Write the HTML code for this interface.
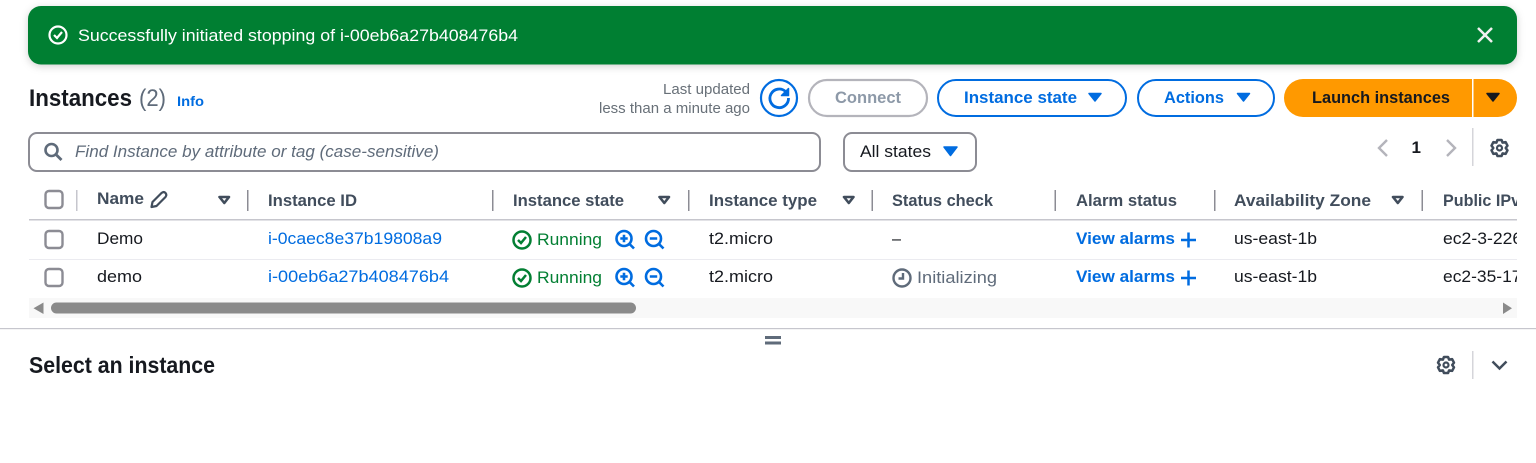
<!DOCTYPE html>
<html><head><meta charset="utf-8"><style>
html,body{margin:0;padding:0;background:#fff;width:1536px;height:463px;overflow:hidden}
svg{display:block;filter:blur(.3px)}
text{font-family:"Liberation Sans",sans-serif;white-space:pre}
.b{font-weight:700}
.h{font-weight:700;font-size:17px;fill:#414d5c}
.c{font-size:17px;fill:#16191f}
.l{font-size:17px;fill:#006ce0}
.lb{font-size:17px;font-weight:700;fill:#006ce0}
.cb{fill:#fff;stroke:#8c8c94;stroke-width:2.400}
.ft{fill:none;stroke:#414d5c;stroke-width:2.600;stroke-linejoin:round}
</style></head><body>
<svg width="1536" height="463" viewBox="0 0 1536 463" xmlns="http://www.w3.org/2000/svg">
<defs>
<filter id="s" x="-5%" y="-50%" width="110%" height="200%"><feDropShadow dx="0" dy="2" stdDeviation="4" flood-color="#000" flood-opacity=".18"/></filter>
<path id="gear" d="M-2.06-8L2.06-8L3.1-5.37L6.11-5.9L8-2.34L6.2 0L8 2.34L6.11 5.9L3.1 5.37L2.06 8L-2.06 8L-3.1 5.37L-6.11 5.9L-8 2.34L-6.2 0L-8-2.34L-6.11-5.9L-3.1-5.37Z" fill="none" stroke="#414d5c" stroke-width="2.500" stroke-linejoin="round"/>
<clipPath id="tc"><rect x="29" y="180" width="1488" height="118"/></clipPath>
</defs>
<rect x="28" y="6" width="1489" height="58.500" rx="13" fill="#037f33" filter="url(#s)"/>
<circle cx="58" cy="35" r="8.500" fill="none" stroke="#fff" stroke-width="2.200"/>
<path d="M54 35l3 3 5-6" fill="none" stroke="#fff" stroke-width="2.200"/>
<text x="78" y="41" font-size="17" fill="#fff" textLength="440" lengthAdjust="spacingAndGlyphs">Successfully initiated stopping of i-00eb6a27b408476b4</text>
<path d="M1478 28l14 14M1492 28l-14 14" stroke="#f0f0f0" stroke-width="2.500" fill="none"/>

<text x="29" y="106" font-size="24" class="b" fill="#16191f" textLength="103" lengthAdjust="spacingAndGlyphs">Instances</text>
<text x="139" y="106" font-size="24" fill="#5f6b7a" textLength="27" lengthAdjust="spacingAndGlyphs">(2)</text>
<text x="177" y="106" font-size="14" class="b" fill="#006ce0" textLength="27" lengthAdjust="spacingAndGlyphs">Info</text>

<text x="663" y="94" font-size="15" fill="#687078" textLength="87" lengthAdjust="spacingAndGlyphs">Last updated</text>
<text x="599" y="113" font-size="15" fill="#687078" textLength="151" lengthAdjust="spacingAndGlyphs">less than a minute ago</text>

<circle cx="779" cy="98" r="18" fill="#fff" stroke="#006ce0" stroke-width="2.200"/>
<path d="M785.500 91.500A9.300 9.300 0 1 0 788.500 98" fill="none" stroke="#006ce0" stroke-width="2.800"/>
<path d="M788.500 88.500v7h-7z" fill="#006ce0" stroke="#006ce0" stroke-width="1.500" stroke-linejoin="round"/>

<rect x="809" y="80" width="118" height="36" rx="18" fill="#fff" stroke="#b4b4bb" stroke-width="2.200"/>
<text x="835" y="103" font-size="17" class="b" fill="#8d99a8" textLength="66" lengthAdjust="spacingAndGlyphs">Connect</text>

<rect x="938" y="80" width="188" height="36" rx="18" fill="#fff" stroke="#006ce0" stroke-width="2"/>
<text x="964" y="103" font-size="17" class="b" fill="#006ce0" textLength="113" lengthAdjust="spacingAndGlyphs">Instance state</text>
<path d="M1089 93.500h12l-6 7.500z" fill="#006ce0" stroke="#006ce0" stroke-width="1.500" stroke-linejoin="round"/>

<rect x="1138" y="80" width="136" height="36" rx="18" fill="#fff" stroke="#006ce0" stroke-width="2"/>
<text x="1164" y="103" font-size="17" class="b" fill="#006ce0" textLength="60" lengthAdjust="spacingAndGlyphs">Actions</text>
<path d="M1237.500 93.500h12l-6 7.500z" fill="#006ce0" stroke="#006ce0" stroke-width="1.500" stroke-linejoin="round"/>

<path d="M1303 79h169v38h-169a19 19 0 0 1 0-38z" fill="#ff9900"/>
<path d="M1473.500 79h24.500a19 19 0 0 1 0 38h-24.500z" fill="#ff9900"/>
<text x="1312" y="103" font-size="17" class="b" fill="#16191f" textLength="138" lengthAdjust="spacingAndGlyphs">Launch instances</text>
<path d="M1487 93.500h12l-6 7.500z" fill="#16191f" stroke="#16191f" stroke-width="1.500" stroke-linejoin="round"/>

<rect x="29" y="133" width="791" height="38" rx="8" fill="#fff" stroke="#8c8c94" stroke-width="2"/>
<circle cx="51.500" cy="150" r="6" fill="none" stroke="#5f6b7a" stroke-width="2.600"/>
<path d="M56 154.500l5.500 5.500" stroke="#5f6b7a" stroke-width="2.800"/>
<text x="75" y="157" font-size="17" font-style="italic" fill="#5f6b7a" textLength="364" lengthAdjust="spacingAndGlyphs">Find Instance by attribute or tag (case-sensitive)</text>

<rect x="844" y="133" width="132" height="38" rx="8" fill="#fff" stroke="#8c8c94" stroke-width="2"/>
<text x="860" y="157" font-size="17" fill="#16191f" textLength="71" lengthAdjust="spacingAndGlyphs">All states</text>
<path d="M944 147h13l-6.500 8.500z" fill="#006ce0" stroke="#006ce0" stroke-width="1.500" stroke-linejoin="round"/>

<path d="M1387 140l-8 8 8 8" fill="none" stroke="#b4b4bb" stroke-width="2.400"/>
<text x="1411.500" y="153" font-size="17" class="b" fill="#16191f">1</text>
<path d="M1447 140l8 8-8 8" fill="none" stroke="#b4b4bb" stroke-width="2.400"/>
<rect x="1472" y="128" width="1.500" height="38" fill="#d5d5da"/>
<use href="#gear" x="1499.500" y="148"/><circle cx="1499.500" cy="148" r="2.500" fill="none" stroke="#414d5c" stroke-width="2.200"/>

<rect x="29" y="298" width="1488" height="20" fill="#f8f8f8"/>
<g clip-path="url(#tc)">
<rect x="45.500" y="191" width="17" height="17" rx="3.500" class="cb"/>
<rect x="76" y="190" width="1.500" height="21" fill="#c6c6cd"/>
<text x="97" y="204" class="h" textLength="47" lengthAdjust="spacingAndGlyphs">Name</text>
<path d="M151.500 207l1-5 9-9c1.500-1.200 3-1.200 4 0s1 2.700 0 4l-9 9z" fill="none" stroke="#414d5c" stroke-width="2.200" stroke-linejoin="round"/>
<path d="M219.500 197h9.500l-4.700 6z" class="ft"/>
<rect x="247" y="190" width="1.500" height="21" fill="#8c8c94"/>
<text x="268" y="206" class="h" textLength="89" lengthAdjust="spacingAndGlyphs">Instance ID</text>
<rect x="492" y="190" width="1.500" height="21" fill="#8c8c94"/>
<text x="513" y="206" class="h" textLength="111" lengthAdjust="spacingAndGlyphs">Instance state</text>
<path d="M659.500 197h9.500l-4.700 6z" class="ft"/>
<rect x="688" y="190" width="1.500" height="21" fill="#8c8c94"/>
<text x="709" y="206" class="h" textLength="108" lengthAdjust="spacingAndGlyphs">Instance type</text>
<path d="M844 197h9.500l-4.700 6z" class="ft"/>
<rect x="871.500" y="190" width="1.500" height="21" fill="#8c8c94"/>
<text x="892" y="206" class="h" textLength="101" lengthAdjust="spacingAndGlyphs">Status check</text>
<rect x="1054.500" y="190" width="1.500" height="21" fill="#8c8c94"/>
<text x="1076" y="206" class="h" textLength="101" lengthAdjust="spacingAndGlyphs">Alarm status</text>
<rect x="1214" y="190" width="1.500" height="21" fill="#8c8c94"/>
<text x="1234" y="206" class="h" textLength="137" lengthAdjust="spacingAndGlyphs">Availability Zone</text>
<path d="M1393 197h9.500l-4.700 6z" class="ft"/>
<rect x="1421.500" y="190" width="1.500" height="21" fill="#8c8c94"/>
<text x="1443" y="206" class="h" textLength="86" lengthAdjust="spacingAndGlyphs">Public IPv4</text>

<rect x="29" y="219" width="1488" height="1.500" fill="#c6c6cd"/>
<rect x="29" y="259" width="1488" height="1" fill="#ebebf0"/>

<rect x="45.500" y="231" width="17" height="17" rx="3.500" class="cb"/>
<text x="97" y="244" class="c" textLength="46" lengthAdjust="spacingAndGlyphs">Demo</text>
<text x="268" y="244" class="l" textLength="174" lengthAdjust="spacingAndGlyphs">i-0caec8e37b19808a9</text>
<circle cx="522" cy="240" r="8.500" fill="none" stroke="#037f33" stroke-width="2.500"/>
<path d="M518 240l3 3 5-6" fill="none" stroke="#037f33" stroke-width="2.500"/>
<text x="537" y="245" font-size="17" fill="#037f33" textLength="65" lengthAdjust="spacingAndGlyphs">Running</text>
<circle cx="624" cy="238.500" r="7.500" fill="none" stroke="#006ce0" stroke-width="2.600"/><path d="M629.500 244l4.500 4.500M620.300 238.500h7.400M624 234.800v7.400" fill="none" stroke="#006ce0" stroke-width="2.600"/>
<circle cx="653.500" cy="238.500" r="7.500" fill="none" stroke="#006ce0" stroke-width="2.600"/><path d="M659 244l4.500 4.500M649.800 238.500h7.400" fill="none" stroke="#006ce0" stroke-width="2.600"/>
<text x="709" y="244" class="c" textLength="64" lengthAdjust="spacingAndGlyphs">t2.micro</text>
<text x="892" y="244" class="c" textLength="9" lengthAdjust="spacingAndGlyphs">–</text>
<text x="1076" y="244" class="lb" textLength="99" lengthAdjust="spacingAndGlyphs">View alarms</text>
<path d="M1181 240h15M1188.500 232.500v15" stroke="#006ce0" stroke-width="2.500" fill="none"/>
<text x="1234" y="244" class="c" textLength="83" lengthAdjust="spacingAndGlyphs">us-east-1b</text>
<text x="1443" y="244" class="c" textLength="85" lengthAdjust="spacingAndGlyphs">ec2-3-226-</text>

<rect x="45.500" y="269" width="17" height="17" rx="3.500" class="cb"/>
<text x="97" y="282" class="c" textLength="45" lengthAdjust="spacingAndGlyphs">demo</text>
<text x="268" y="282" class="l" textLength="181" lengthAdjust="spacingAndGlyphs">i-00eb6a27b408476b4</text>
<circle cx="522" cy="278" r="8.500" fill="none" stroke="#037f33" stroke-width="2.500"/>
<path d="M518 278l3 3 5-6" fill="none" stroke="#037f33" stroke-width="2.500"/>
<text x="537" y="283" font-size="17" fill="#037f33" textLength="65" lengthAdjust="spacingAndGlyphs">Running</text>
<circle cx="624" cy="276.500" r="7.500" fill="none" stroke="#006ce0" stroke-width="2.600"/><path d="M629.500 282l4.500 4.500M620.300 276.500h7.400M624 272.800v7.400" fill="none" stroke="#006ce0" stroke-width="2.600"/>
<circle cx="653.500" cy="276.500" r="7.500" fill="none" stroke="#006ce0" stroke-width="2.600"/><path d="M659 282l4.500 4.500M649.800 276.500h7.400" fill="none" stroke="#006ce0" stroke-width="2.600"/>
<text x="709" y="282" class="c" textLength="64" lengthAdjust="spacingAndGlyphs">t2.micro</text>
<circle cx="902" cy="278" r="8.500" fill="none" stroke="#5f6b7a" stroke-width="2.400"/>
<path d="M903 273v5.500h-4.500" fill="none" stroke="#5f6b7a" stroke-width="2.400"/>
<text x="917" y="283" font-size="17" fill="#5f6b7a" textLength="80" lengthAdjust="spacingAndGlyphs">Initializing</text>
<text x="1076" y="282" class="lb" textLength="99" lengthAdjust="spacingAndGlyphs">View alarms</text>
<path d="M1181 278h15M1188.500 270.500v15" stroke="#006ce0" stroke-width="2.500" fill="none"/>
<text x="1234" y="282" class="c" textLength="83" lengthAdjust="spacingAndGlyphs">us-east-1b</text>
<text x="1443" y="282" class="c" textLength="94" lengthAdjust="spacingAndGlyphs">ec2-35-175-</text>
</g>

<path d="M43.500 302.500v11.500l-10-5.700z" fill="#8a8a8a"/>
<rect x="51" y="302.500" width="585" height="11" rx="5.500" fill="#8a8a8a"/>
<path d="M1503 302.500v11.500l9-5.700z" fill="#8a8a8a"/>

<rect x="0" y="328" width="1536" height="1.200" fill="#c6c6cd"/>
<rect x="765" y="336" width="16" height="3" fill="#5f6b7a"/>
<rect x="765" y="341.500" width="16" height="3" fill="#5f6b7a"/>

<text x="29" y="373" font-size="23" class="b" fill="#16191f" textLength="186" lengthAdjust="spacingAndGlyphs">Select an instance</text>
<use href="#gear" x="1446" y="365"/><circle cx="1446" cy="365" r="2.500" fill="none" stroke="#414d5c" stroke-width="2.200"/>
<rect x="1472" y="351" width="1.500" height="28" fill="#d5d5da"/>
<path d="M1492.500 361.500l7 7 7-7" fill="none" stroke="#414d5c" stroke-width="2.500"/>
</svg>
</body></html>
